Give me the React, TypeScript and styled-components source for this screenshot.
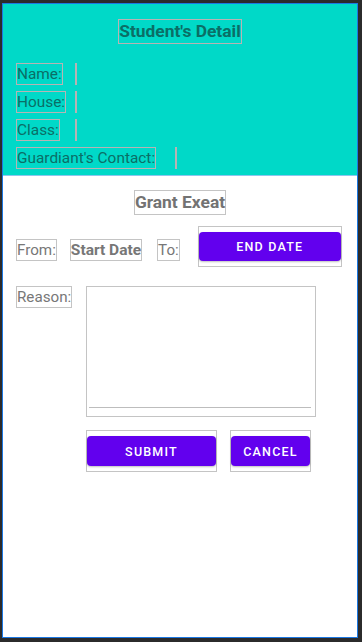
import React from "react";
import styled, { createGlobalStyle } from "styled-components";

const GlobalStyle = createGlobalStyle`
  html, body {
    margin: 0;
    padding: 0;
    background: #2b2b2b;
  }
  body {
    font-family: Roboto, "Noto Sans", "Liberation Sans", sans-serif;
  }
  * { box-sizing: border-box; }
`;

const Frame = styled.div`
  margin: 3px 0 0 2px;
  width: 356px;
  height: 635px;
  border: 1px solid #1c78e2;
  background: #ffffff;
  display: flex;
  flex-direction: column;
`;

const Header = styled.section`
  background: #00d9c8;
  height: 172px;
  border-bottom: 1px solid #8cc6ee;
  padding: 15px 13px 0 13px;
  display: flex;
  flex-direction: column;
`;

const Title = styled.div<{ $onTeal?: boolean }>`
  align-self: center;
  border: 1px solid ${(p) => (p.$onTeal ? "#b9b3b3" : "#c4c4c4")};
  font-size: 17.4px;
  font-weight: 700;
  line-height: 23px;
  color: ${(p) => (p.$onTeal ? "#0b6e66" : "#737373")};
  white-space: nowrap;
`;

const DetailList = styled.div`
  margin-top: 19px;
  display: flex;
  flex-direction: column;
  gap: 6px;
`;

const DetailRow = styled.div`
  display: flex;
  align-items: stretch;
  height: 22px;
`;

const DetailLabel = styled.div`
  border: 1px solid #b9b3b3;
  font-size: 15.4px;
  line-height: 20px;
  color: #0b6e66;
  white-space: nowrap;
`;

const ValueLine = styled.div<{ $gap: number }>`
  margin-left: ${(p) => p.$gap}px;
  width: 2px;
  border-left: 1px solid #b9b3b3;
  border-right: 1px solid #b9b3b3;
`;

const Body = styled.section`
  flex: 1;
  padding: 14px 13px 0 13px;
  display: flex;
  flex-direction: column;
`;

const DateRow = styled.div`
  margin-top: 11px;
  display: flex;
  align-items: flex-start;
`;

const Label = styled.div<{ $bold?: boolean; $gap?: number; $top?: number }>`
  margin-left: ${(p) => p.$gap ?? 0}px;
  margin-top: ${(p) => p.$top ?? 0}px;
  border: 1px solid #c4c4c4;
  font-size: ${(p) => (p.$bold ? 15.5 : 15.2)}px;
  line-height: 20px;
  font-weight: ${(p) => (p.$bold ? 700 : 400)};
  color: #777777;
  white-space: nowrap;
`;

const ButtonBox = styled.div<{ $gap?: number; $width: number; $height: number }>`
  margin-left: ${(p) => p.$gap ?? 0}px;
  width: ${(p) => p.$width}px;
  height: ${(p) => p.$height}px;
  border: 1px solid #c4c4c4;
  padding: 5px 0;
  display: flex;
`;

const Button = styled.button`
  flex: 1;
  border: none;
  border-radius: 4px;
  background: #6200ee;
  color: #ffffff;
  font-family: Roboto, "Noto Sans", sans-serif;
  font-size: 12.5px;
  font-weight: 500;
  letter-spacing: 1.2px;
  text-transform: uppercase;
  box-shadow: 0 1px 2px rgba(0, 0, 0, 0.25);
  padding: 0;
  cursor: pointer;
`;

const ReasonRow = styled.div`
  margin-top: 19px;
  display: flex;
  align-items: flex-start;
`;

const ReasonBox = styled.div<{ $gap: number }>`
  margin-left: ${(p) => p.$gap}px;
  width: 230px;
  height: 131px;
  border: 1px solid #c4c4c4;
  padding: 0 4px 8px 2px;
  display: flex;
  flex-direction: column;
  justify-content: flex-end;
`;

const Underline = styled.div`
  height: 1px;
  background: #bdbdbd;
`;

const ActionRow = styled.div`
  margin-top: 13px;
  margin-left: 70px;
  display: flex;
`;

const details: { label: string; gap: number }[] = [
  { label: "Name:", gap: 12 },
  { label: "House:", gap: 9 },
  { label: "Class:", gap: 15 },
  { label: "Guardiant's Contact:", gap: 19 },
];

export default function App() {
  return (
    <>
      <GlobalStyle />
      <Frame>
        <Header>
          <Title $onTeal>Student's Detail</Title>
          <DetailList>
            {details.map((d) => (
              <DetailRow key={d.label}>
                <DetailLabel>{d.label}</DetailLabel>
                <ValueLine $gap={d.gap} />
              </DetailRow>
            ))}
          </DetailList>
        </Header>
        <Body>
          <Title>Grant Exeat</Title>
          <DateRow>
            <Label $top={13}>From:</Label>
            <Label $bold $gap={13} $top={13}>Start Date</Label>
            <Label $gap={15} $top={13}>To:</Label>
            <ButtonBox $gap={18} $width={144} $height={41}>
              <Button>End Date</Button>
            </ButtonBox>
          </DateRow>
          <ReasonRow>
            <Label>Reason:</Label>
            <ReasonBox $gap={14}>
              <Underline />
            </ReasonBox>
          </ReasonRow>
          <ActionRow>
            <ButtonBox $width={131} $height={42}>
              <Button>Submit</Button>
            </ButtonBox>
            <ButtonBox $gap={13} $width={81} $height={42}>
              <Button>Cancel</Button>
            </ButtonBox>
          </ActionRow>
        </Body>
      </Frame>
    </>
  );
}
